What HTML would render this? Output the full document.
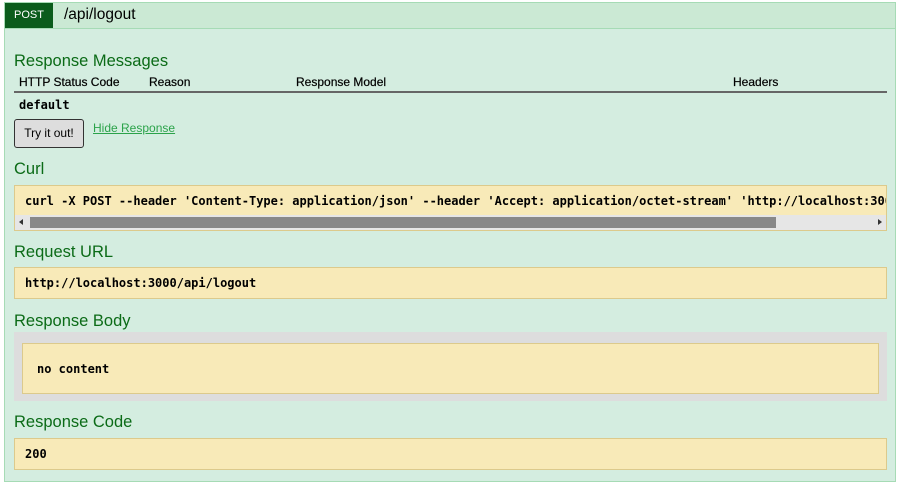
<!DOCTYPE html>
<html><head><style>
*{margin:0;padding:0;box-sizing:border-box}
body{width:900px;height:478px;background:#fff;position:relative;overflow:hidden;font-family:"Liberation Sans",Arial,sans-serif}
.a{position:absolute}
.outer{left:4px;top:2px;width:892px;height:480px;background:#d4ede0;border:1px solid #a6dbb5}
.bar{left:4px;top:2px;width:892px;height:27px;background:#cbe9d4;border:1px solid #a6dbb5}
.post{left:5px;top:3px;width:48px;height:25px;background:#0b5c1c;color:#fff;font-size:11px;line-height:25px;text-align:center}
.path{left:64px;top:6px;font-size:15.5px;color:#000}
.h{color:#0b6b17;font-size:16.5px}
.th{font-size:12px;color:#000;top:75px;-webkit-text-stroke:0.2px #000}
.code{font-family:"DejaVu Sans Mono",monospace;font-weight:bold;font-size:12px;color:#000;white-space:pre}
.box{background:#f8eab8;border:1px solid #dcca8c}
</style></head><body>
<div class="a outer"></div>
<div class="a bar"></div>
<div class="a post">POST</div>
<div class="a path">/api/logout</div>
<div class="a h" style="left:14px;top:52px">Response Messages</div>
<div class="a th" style="left:19px">HTTP Status Code</div>
<div class="a th" style="left:149px">Reason</div>
<div class="a th" style="left:296px">Response Model</div>
<div class="a th" style="left:733px">Headers</div>
<div class="a" style="left:14px;top:91px;width:873px;height:2px;background:#666"></div>
<div class="a code" style="left:19px;top:98px">default</div>
<div class="a" style="left:14px;top:119px;width:70px;height:29px;background:#ddd;border:1px solid #333;border-radius:3px;font-size:12px;line-height:27px;text-align:center;color:#000">Try it out!</div>
<div class="a" style="left:93px;top:121px;font-size:12px;color:#2ba34a;text-decoration:underline">Hide Response</div>
<div class="a h" style="left:14px;top:160px">Curl</div>
<div class="a box" style="left:14px;top:185px;width:873px;height:46px;overflow:hidden">
 <div class="a code" style="left:10px;top:8px">curl -X POST --header 'Content-Type: application/json' --header 'Accept: application/octet-stream' 'http://localhost:3000/api/logout'</div>
 <div class="a" style="left:0;top:29px;width:871px;height:15px;background:#e6e6e6"></div>
 <div class="a" style="left:15px;top:31px;width:746px;height:11px;background:#888"></div>
 <div class="a" style="left:4px;top:33px;width:0;height:0;border-top:3px solid transparent;border-bottom:3px solid transparent;border-right:4px solid #333"></div>
 <div class="a" style="left:863px;top:33px;width:0;height:0;border-top:3px solid transparent;border-bottom:3px solid transparent;border-left:4px solid #333"></div>
</div>
<div class="a h" style="left:14px;top:243px">Request URL</div>
<div class="a box" style="left:14px;top:267px;width:873px;height:32px"><div class="a code" style="left:10px;top:8px">http://localhost:3000/api/logout</div></div>
<div class="a h" style="left:14px;top:312px">Response Body</div>
<div class="a" style="left:14px;top:332px;width:873px;height:69px;background:#ddd"></div>
<div class="a box" style="left:22px;top:343px;width:857px;height:51px"><div class="a code" style="left:14px;top:18px">no content</div></div>
<div class="a h" style="left:14px;top:413px">Response Code</div>
<div class="a box" style="left:14px;top:438px;width:873px;height:32px"><div class="a code" style="left:10px;top:8px">200</div></div>
</body></html>
